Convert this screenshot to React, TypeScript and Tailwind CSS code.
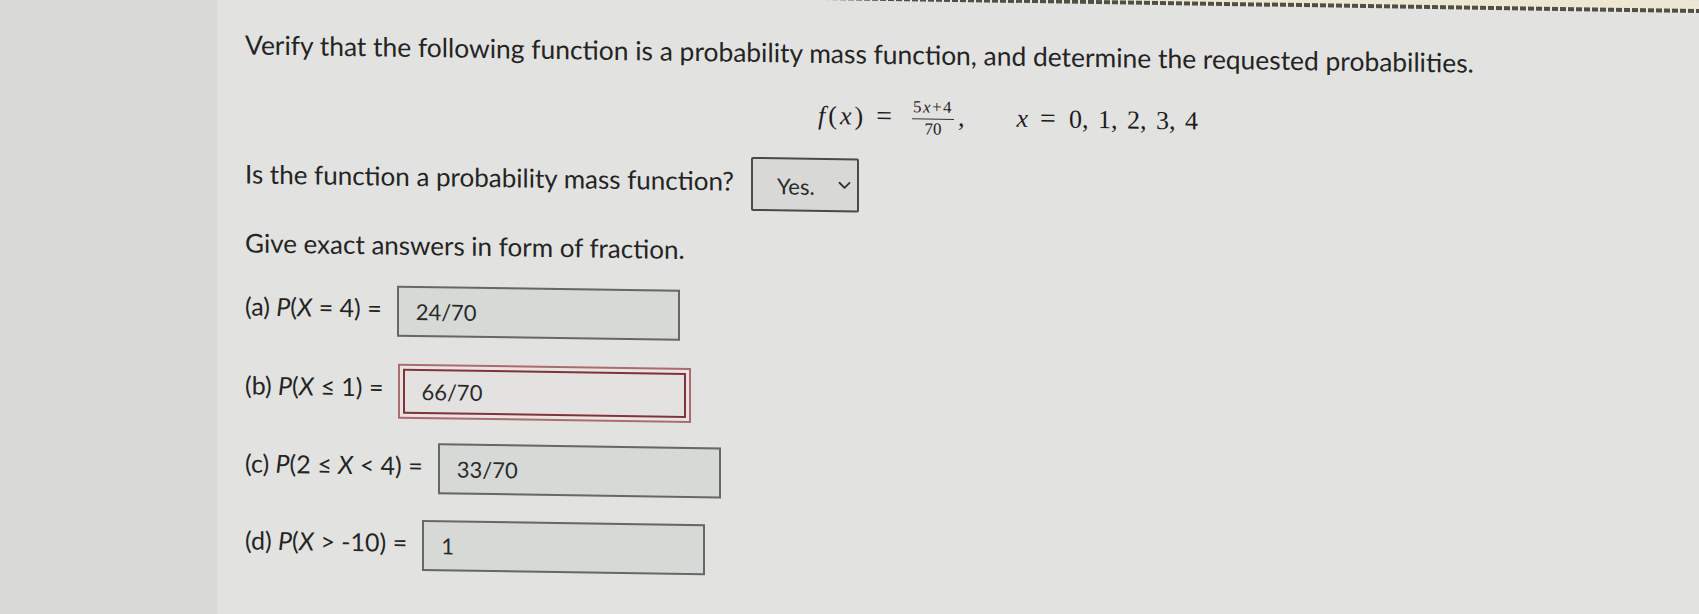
const Chevron = () => (
  <svg width="13" height="8" viewBox="0 0 13 8" fill="none" stroke="#333" strokeWidth="1.9" strokeLinecap="round" strokeLinejoin="round">
    <path d="M1.5 1.5 6.5 6.5 11.5 1.5" />
  </svg>
);

type Row = { label: React.ReactNode; value: string; active?: boolean; mt: string };

const rows: Row[] = [
  { label: (<>(a) <i>P</i>(<i>X</i> = 4) =</>), value: "24/70", mt: "mt-[25px]" },
  { label: (<>(b) <i>P</i>(<i>X</i> ≤ 1) =</>), value: "66/70", active: true, mt: "mt-[27px]" },
  { label: (<>(c) <i>P</i>(2 ≤ <i>X</i> &lt; 4) =</>), value: "33/70", mt: "mt-[24px]" },
  { label: (<>(d) <i>P</i>(<i>X</i> &gt; -10) =</>), value: "1", mt: "mt-[26px]" },
];

function AnswerBox({ value, active }: { value: string; active?: boolean }) {
  if (active) {
    return (
      <div className="w-[293px] h-[55px] border-2 border-[#a96d70] bg-[#ebe3e2] p-[3px]">
        <div className="h-full w-full border-2 border-[#7c353b] bg-[#e4e2e1] pl-[16px] flex items-center text-[22px] text-[#2a2a2a]">
          {value}
        </div>
      </div>
    );
  }
  return (
    <div className="w-[283px] h-[51px] border-2 border-[#656866] bg-[#d6d9d6] pl-[17px] flex items-center text-[22px] text-[#2a2a2a]">
      {value}
    </div>
  );
}

export default function App() {
  return (
    <div className="h-[614px] w-full flex overflow-hidden bg-[#e2e2e0] font-['Lato',sans-serif] text-[#242424]">
      <div className="w-[217px] shrink-0 bg-[#dadad8]" />
      <div className="flex-1">
        <div className="origin-top-left skew-y-[0.85deg] pl-[28px]">
          <div className="ml-[395px] -mt-[21px] h-[12px] bg-[#ece6d3] flex flex-col justify-end">
            <div className="h-[4px] bg-[repeating-linear-gradient(90deg,#4f4f49_0_6px,transparent_6px_8px)]" />
          </div>

          <div className="mt-[37px] text-[26.4px] leading-[32px] whitespace-nowrap">
            Verify that the following function is a probability mass function, and determine the requested probabilities.
          </div>

          <div className="mt-[26px] ml-[573px] text-[26px] leading-[40px] whitespace-nowrap font-['Liberation_Serif',serif] text-[#1e1e1e]">
            <span className="tracking-[3px]"><i>f</i>(<i>x</i>)</span>
            <span className="ml-[10px] text-[28px]">=</span>
            <span className="ml-[20px] inline-flex flex-col items-center align-[13px] text-[17px]">
              <span className="leading-[16px] pb-[3px] px-[1px] border-b border-[#333] tracking-[1.5px]">5<i>x</i>+4</span>
              <span className="leading-[16px] pt-[2px]">70</span>
            </span>
            <span className="ml-[4px]">,</span>
            <span className="ml-[52px]"><i>x</i></span>
            <span className="ml-[12px] text-[28px]">=</span>
            <span className="ml-[13px] [word-spacing:3px]">0, 1, 2, 3, 4</span>
          </div>

          <div className="mt-[22px] flex items-start">
            <span className="mt-[9px] text-[26px] leading-[30px] whitespace-nowrap">
              Is the function a probability mass function?
            </span>
            <div className="ml-[17px] w-[108px] h-[54px] border-2 border-[#4a4a4a] rounded-[2px] bg-[#d8d8d7] flex items-center pl-[24px] pr-[6px] justify-between">
              <span className="text-[22px] text-[#2a2a2a] mt-[2px]">Yes.</span>
              <Chevron />
            </div>
          </div>

          <div className="mt-[23px] text-[26px] leading-[32px] whitespace-nowrap">
            Give exact answers in form of fraction.
          </div>

          {rows.map((r, i) => (
            <div key={i} className={`${r.mt} flex items-start gap-[15px]`}>
              <span className={`${r.active ? "mt-[8px]" : "mt-[7px]"} text-[25px] leading-[30px] whitespace-nowrap`}>
                {r.label}
              </span>
              <AnswerBox value={r.value} active={r.active} />
            </div>
          ))}
        </div>
      </div>
    </div>
  );
}
